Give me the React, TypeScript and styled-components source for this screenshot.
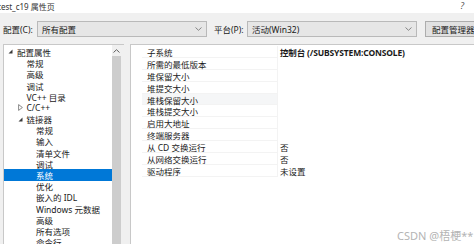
import React from "react";
import styled, { createGlobalStyle } from "styled-components";

const GlobalStyle = createGlobalStyle`
  html, body { margin: 0; padding: 0; background: #f0f0f0; }
  body { font-family: "Noto Sans", "Noto Sans CJK SC", sans-serif; color: #1a1a1a; }
  * { box-sizing: border-box; }
`;

const Window = styled.div`
  position: relative;
  width: 474px;
  height: 244px;
  overflow: hidden;
  display: flex;
  flex-direction: column;
  background: #f0f0f0;
`;

const TitleBar = styled.div`
  height: 13px;
  flex: none;
  background: #ffffff;
  display: flex;
  align-items: center;
  justify-content: space-between;
  padding: 0 10px 0 0;
  font-size: 8px;
  color: #333;
`;

const TitleText = styled.span`
  margin-left: -2px;
  line-height: 13px;
`;

const Help = styled.span`
  font-size: 9px;
  font-style: italic;
  color: #555;
  margin-top: -3px;
`;

const Toolbar = styled.div`
  height: 31px;
  flex: none;
  display: flex;
  align-items: center;
  padding-left: 3px;
  font-size: 8.5px;
`;

const Label = styled.span<{ $w: number }>`
  width: ${(p) => p.$w}px;
  flex: none;
  white-space: nowrap;
`;

const Select = styled.div<{ $w: number }>`
  width: ${(p) => p.$w}px;
  height: 16px;
  flex: none;
  display: flex;
  align-items: center;
  justify-content: space-between;
  padding: 0 4px 0 4px;
  background: #e6e6e6;
  border: 1px solid #b9b9b9;
  margin-right: 7px;
`;

const Button = styled.div`
  height: 16px;
  flex: none;
  margin-left: 1px;
  padding: 0 6px;
  display: flex;
  align-items: center;
  background: #e1e1e1;
  border: 1px solid #adadad;
  white-space: nowrap;
`;

const Body = styled.div`
  flex: 1;
  display: flex;
  gap: 6px;
  padding-left: 3px;
  min-height: 0;
`;

const TreePanel = styled.div`
  width: 121px;
  flex: none;
  display: flex;
  background: #ffffff;
  border-top: 1px solid #c8c8c8;
  border-left: 1px solid #c8c8c8;
`;

const TreeList = styled.div`
  flex: 1;
  padding-top: 1.4px;
  font-size: 8.5px;
`;

const TreeRow = styled.div<{ $level: number; $selected?: boolean }>`
  height: 11.2px;
  display: flex;
  align-items: center;
  padding-left: ${(p) => 9 + p.$level * 9.5}px;
  white-space: nowrap;
  background: ${(p) => (p.$selected ? "#0078d7" : "transparent")};
  color: ${(p) => (p.$selected ? "#ffffff" : "#1a1a1a")};
`;

const Toggle = styled.span`
  width: 9px;
  flex: none;
  display: flex;
  align-items: center;
  margin-left: -5px;
`;

const Scrollbar = styled.div`
  width: 12px;
  flex: none;
  display: flex;
  flex-direction: column;
  align-items: flex-start;
  background: #f0f0f0;
`;

const ScrollArrow = styled.div`
  height: 10px;
  width: 9px;
  display: flex;
  align-items: center;
  justify-content: center;
  margin-top: 1px;
`;

const Thumb = styled.div`
  width: 9px;
  flex: 1;
  background: #cdcdcd;
`;

const PropPanel = styled.div`
  flex: 1;
  background: #ffffff;
  border-top: 1px solid #c8c8c8;
  border-left: 1px solid #c8c8c8;
  padding: 1px 0 0 11px;
  font-size: 8.5px;
`;

const PropRow = styled.div<{ $hl?: boolean }>`
  height: 11.9px;
  display: grid;
  grid-template-columns: 136px 1fr;
  border-bottom: 1px solid #f3f3f3;
  background: ${(p) => (p.$hl ? "#f5f6f7" : "transparent")};
`;

const NameCell = styled.div`
  display: flex;
  align-items: center;
  padding-left: 5px;
  border-right: 1px solid #f3f3f3;
  white-space: nowrap;
`;

const ValueCell = styled.div<{ $bold?: boolean }>`
  display: flex;
  align-items: center;
  padding-left: 2px;
  white-space: nowrap;
  font-weight: ${(p) => (p.$bold ? 700 : 400)};
  letter-spacing: ${(p) => (p.$bold ? "-0.15px" : "0")};
  background: #ffffff;
`;

const Watermark = styled.div`
  position: absolute;
  left: 397px;
  top: 227px;
  font-size: 11px;
  color: #b4b4b4;
  white-space: nowrap;
`;

const Chevron = () => (
  <svg width="7" height="4" viewBox="0 0 7 4">
    <path d="M0.5 0.5 L3.5 3.3 L6.5 0.5" fill="none" stroke="#7a7a7a" strokeWidth="0.9" />
  </svg>
);

const Expanded = ({ color }: { color: string }) => (
  <svg width="5" height="5" viewBox="0 0 5 5">
    <path d="M4.5 0.5 L4.5 4.5 L0.5 4.5 Z" fill={color} />
  </svg>
);

const Collapsed = () => (
  <svg width="5" height="7" viewBox="0 0 5 7">
    <path d="M0.6 0.6 L4.4 3.5 L0.6 6.4 Z" fill="none" stroke="#6b6b6b" strokeWidth="0.8" />
  </svg>
);

type TreeItem = { label: string; level: number; toggle?: "open" | "closed"; selected?: boolean };

const treeItems: TreeItem[] = [
  { label: "配置属性", level: 0, toggle: "open" },
  { label: "常规", level: 1 },
  { label: "高级", level: 1 },
  { label: "调试", level: 1 },
  { label: "VC++ 目录", level: 1 },
  { label: "C/C++", level: 1, toggle: "closed" },
  { label: "链接器", level: 1, toggle: "open" },
  { label: "常规", level: 2 },
  { label: "输入", level: 2 },
  { label: "清单文件", level: 2 },
  { label: "调试", level: 2 },
  { label: "系统", level: 2, selected: true },
  { label: "优化", level: 2 },
  { label: "嵌入的 IDL", level: 2 },
  { label: "Windows 元数据", level: 2 },
  { label: "高级", level: 2 },
  { label: "所有选项", level: 2 },
  { label: "命令行", level: 2 },
];

type Prop = { name: string; value?: string; bold?: boolean; hl?: boolean };

const props: Prop[] = [
  { name: "子系统", value: "控制台 (/SUBSYSTEM:CONSOLE)", bold: true },
  { name: "所需的最低版本" },
  { name: "堆保留大小" },
  { name: "堆提交大小" },
  { name: "堆栈保留大小", hl: true },
  { name: "堆栈提交大小" },
  { name: "启用大地址" },
  { name: "终端服务器" },
  { name: "从 CD 交换运行", value: "否" },
  { name: "从网络交换运行", value: "否" },
  { name: "驱动程序", value: "未设置" },
];

export default function App() {
  return (
    <>
      <GlobalStyle />
      <Window>
        <TitleBar>
          <TitleText>test_c19 属性页</TitleText>
          <Help>?</Help>
        </TitleBar>
        <Toolbar>
          <Label $w={34}>配置(C):</Label>
          <Select $w={170}>
            <span>所有配置</span>
            <Chevron />
          </Select>
          <Label $w={33}>平台(P):</Label>
          <Select $w={170}>
            <span>活动(Win32)</span>
            <Chevron />
          </Select>
          <Button>配置管理器(O)...</Button>
        </Toolbar>
        <Body>
          <TreePanel>
            <TreeList>
              {treeItems.map((t, i) => (
                <TreeRow key={i} $level={t.level} $selected={t.selected}>
                  <Toggle>
                    {t.toggle === "open" && <Expanded color="#3a3a3a" />}
                    {t.toggle === "closed" && <Collapsed />}
                  </Toggle>
                  {t.label}
                </TreeRow>
              ))}
            </TreeList>
            <Scrollbar>
              <ScrollArrow>
                <svg width="7" height="4" viewBox="0 0 7 4">
                  <path d="M0.5 3.5 L3.5 0.7 L6.5 3.5" fill="none" stroke="#606060" strokeWidth="1" />
                </svg>
              </ScrollArrow>
              <Thumb />
            </Scrollbar>
          </TreePanel>
          <PropPanel>
            {props.map((p, i) => (
              <PropRow key={i} $hl={p.hl}>
                <NameCell>{p.name}</NameCell>
                <ValueCell $bold={p.bold}>{p.value ?? ""}</ValueCell>
              </PropRow>
            ))}
          </PropPanel>
        </Body>
        <Watermark>CSDN @梧梗**</Watermark>
      </Window>
    </>
  );
}
